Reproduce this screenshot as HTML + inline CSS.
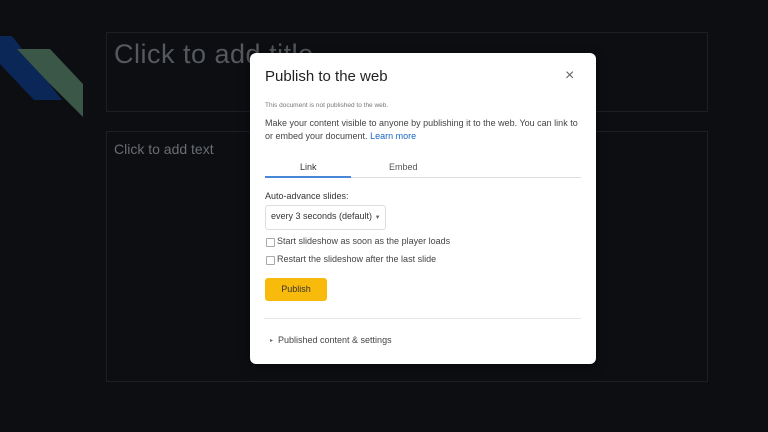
<!DOCTYPE html>
<html><head><style>
body{margin:0;width:768px;height:432px;background:#0c0e12;position:relative;overflow:hidden;font-family:"Liberation Sans",Arial,sans-serif}
.box{position:absolute;border:1px solid #1c1f24}
.dlg{position:absolute;left:250px;top:53px;width:346px;height:311px;background:#fff;border-radius:6px;box-shadow:0 2px 10px rgba(0,0,0,.5)}
.a{position:absolute;white-space:nowrap}
.cb{position:absolute;width:7px;height:7px;border:1px solid #aaa;border-radius:1px;left:16px}
</style></head><body>
<svg style="position:absolute;left:0;top:0" width="100" height="130">
<polygon points="0,36 12,36 62,100 34,100 0,64" fill="#0b2757"/>
<polygon points="17,49 50,49 83,84 83,117 48,82" fill="#3a5748"/>
</svg>
<div class="box" style="left:106px;top:32px;width:600px;height:78px"></div>
<div class="box" style="left:106px;top:131px;width:600px;height:249px"></div>
<div class="a" style="left:114px;top:39px;font-size:27px;letter-spacing:0.5px;color:#55585c">Click to add title</div>
<div class="a" style="left:114px;top:141px;font-size:14px;color:#6a6d71">Click to add text</div>
<div class="dlg">
<div class="a" style="left:15px;top:15px;font-size:15px;color:#222">Publish to the web</div>
<div class="a" style="left:315px;top:14px;font-size:16px;color:#666">×</div>
<div class="a" style="left:15px;top:49px;font-size:6.5px;color:#777">This document is not published to the web.</div>
<div class="a" style="left:15px;top:64px;font-size:9px;color:#444;line-height:13px">Make your content visible to anyone by publishing it to the web. You can link to<br>or embed your document. <span style="color:#1a66c4">Learn more</span></div>
<div class="a" style="left:50px;top:109px;font-size:9px;color:#333">Link</div>
<div class="a" style="left:139px;top:109px;font-size:9px;color:#555">Embed</div>
<div class="a" style="left:15px;top:124px;width:316px;height:1px;background:#ddd"></div>
<div class="a" style="left:15px;top:123px;width:86px;height:2px;background:#4a86d8"></div>
<div class="a" style="left:15px;top:138px;font-size:9px;color:#333">Auto-advance slides:</div>
<div class="a" style="left:15px;top:152px;width:119px;height:23px;border:1px solid #ddd;border-radius:3px"></div>
<div class="a" style="left:21px;top:158px;font-size:9px;color:#333">every 3 seconds (default) <span style="font-size:6px;color:#666">▼</span></div>
<div class="cb" style="top:185px"></div>
<div class="a" style="left:27px;top:183px;font-size:9px;color:#444">Start slideshow as soon as the player loads</div>
<div class="cb" style="top:203px"></div>
<div class="a" style="left:27px;top:201px;font-size:9px;color:#444">Restart the slideshow after the last slide</div>
<div class="a" style="left:15px;top:225px;width:62px;height:23px;background:#f9bb0b;border-radius:3px;font-size:9px;color:#333;text-align:center;line-height:23px">Publish</div>
<div class="a" style="left:14px;top:265px;width:317px;height:1px;background:#e6e6e6"></div>
<div class="a" style="left:20px;top:284px;font-size:6px;color:#666">▸</div>
<div class="a" style="left:28px;top:282px;font-size:9px;color:#444">Published content &amp; settings</div>
</div>
</body></html>
